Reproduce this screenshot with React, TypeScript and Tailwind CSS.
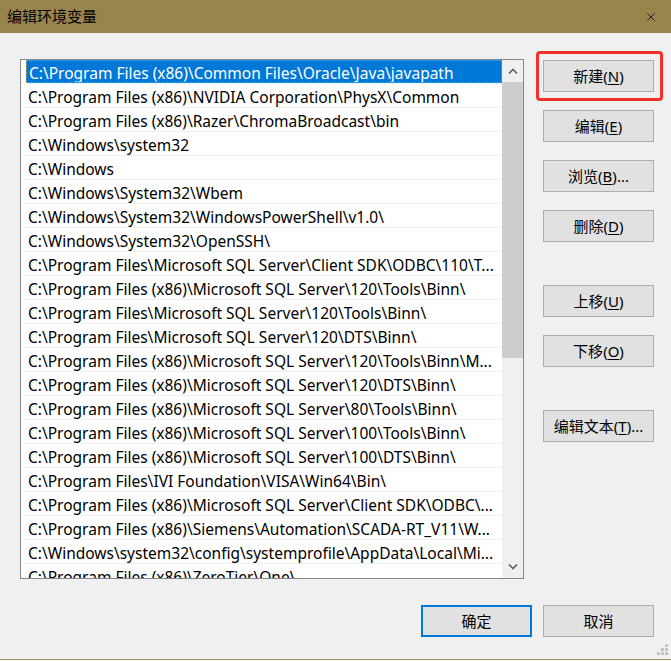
import { X } from "lucide-react";

const paths = [
  "C:\\Program Files (x86)\\Common Files\\Oracle\\Java\\javapath",
  "C:\\Program Files (x86)\\NVIDIA Corporation\\PhysX\\Common",
  "C:\\Program Files (x86)\\Razer\\ChromaBroadcast\\bin",
  "C:\\Windows\\system32",
  "C:\\Windows",
  "C:\\Windows\\System32\\Wbem",
  "C:\\Windows\\System32\\WindowsPowerShell\\v1.0\\",
  "C:\\Windows\\System32\\OpenSSH\\",
  "C:\\Program Files\\Microsoft SQL Server\\Client SDK\\ODBC\\110\\T...",
  "C:\\Program Files (x86)\\Microsoft SQL Server\\120\\Tools\\Binn\\",
  "C:\\Program Files\\Microsoft SQL Server\\120\\Tools\\Binn\\",
  "C:\\Program Files\\Microsoft SQL Server\\120\\DTS\\Binn\\",
  "C:\\Program Files (x86)\\Microsoft SQL Server\\120\\Tools\\Binn\\M...",
  "C:\\Program Files (x86)\\Microsoft SQL Server\\120\\DTS\\Binn\\",
  "C:\\Program Files (x86)\\Microsoft SQL Server\\80\\Tools\\Binn\\",
  "C:\\Program Files (x86)\\Microsoft SQL Server\\100\\Tools\\Binn\\",
  "C:\\Program Files (x86)\\Microsoft SQL Server\\100\\DTS\\Binn\\",
  "C:\\Program Files\\IVI Foundation\\VISA\\Win64\\Bin\\",
  "C:\\Program Files (x86)\\Microsoft SQL Server\\Client SDK\\ODBC\\...",
  "C:\\Program Files (x86)\\Siemens\\Automation\\SCADA-RT_V11\\W...",
  "C:\\Windows\\system32\\config\\systemprofile\\AppData\\Local\\Mi...",
  "C:\\Program Files (x86)\\ZeroTier\\One\\",
];

function DlgButton({
  label,
  hotkey,
  suffix = "",
  primary = false,
}: {
  label: string;
  hotkey?: string;
  suffix?: string;
  primary?: boolean;
}) {
  return (
    <button
      type="button"
      className={`flex h-[32px] w-[111px] items-center justify-center bg-[#e1e1e1] text-[15px] text-black ${
        primary ? "border-2 border-[#0078d7]" : "border border-[#adadad]"
      }`}
    >
      {label}
      {hotkey && (
        <>
          (<span className="underline underline-offset-2">{hotkey}</span>)
        </>
      )}
      {suffix}
    </button>
  );
}

function Chevron({ up }: { up?: boolean }) {
  return (
    <svg width="10" height="6" viewBox="0 0 10 6" className="text-[#606060]">
      <path
        d={up ? "M1 5.5 L5 1.5 L9 5.5" : "M1 0.5 L5 4.5 L9 0.5"}
        fill="none"
        stroke="currentColor"
        strokeWidth="1.6"
      />
    </svg>
  );
}

export default function App() {
  return (
    <div className="relative flex h-[661px] w-[671px] flex-col overflow-hidden bg-[#f0f0f0] font-['Noto_Sans','Noto_Sans_CJK_SC',sans-serif] text-black">
      <div className="flex h-[33px] shrink-0 items-center justify-between bg-[#99844d] pl-[7px] pr-[13px]">
        <span className="text-[15px] leading-none">编辑环境变量</span>
        <X size={14} strokeWidth={1.3} className="text-black" />
      </div>

      <div className="flex pl-[20px] pt-[26px]">
        <div className="flex h-[520px] w-[504px] border border-[#828790] bg-white">
          <div className="flex-1 overflow-hidden">
            {paths.map((p, i) => (
              <div key={p} className="h-[24px] border-b border-[#f0f0f0]">
                <div
                  className={`ml-[5px] flex h-[23px] items-center truncate whitespace-nowrap pl-[2px] pt-[4px] text-[15.5px] ${
                    i === 0
                      ? "border border-dotted border-[#e0903a] bg-[#0078d7] pl-[1px] pt-[3px] text-white"
                      : ""
                  }`}
                >
                  {p}
                </div>
              </div>
            ))}
          </div>
          <div className="flex w-[21px] flex-col bg-[#f0f0f0]">
            <div className="flex h-[22px] items-center justify-center">
              <Chevron up />
            </div>
            <div className="h-[276px] bg-[#cdcdcd]" />
            <div className="flex-1" />
            <div className="flex h-[22px] items-center justify-center">
              <Chevron />
            </div>
          </div>
        </div>

        <div className="ml-[19px] mt-[1px] flex flex-col">
          <div className="relative">
            <DlgButton label="新建" hotkey="N" />
            <span className="absolute -bottom-[9px] -left-[7px] -right-[9px] -top-[9px] rounded-[4px] border-[3px] border-[#f2302b]" />
          </div>
          <div className="mt-[18px] flex flex-col gap-[18px]">
            <DlgButton label="编辑" hotkey="E" />
            <DlgButton label="浏览" hotkey="B" suffix="..." />
            <DlgButton label="删除" hotkey="D" />
          </div>
          <div className="mt-[43px] flex flex-col gap-[18px]">
            <DlgButton label="上移" hotkey="U" />
            <DlgButton label="下移" hotkey="O" />
          </div>
          <div className="mt-[43px]">
            <DlgButton label="编辑文本" hotkey="T" suffix="..." />
          </div>
        </div>
      </div>

      <div className="flex justify-end gap-[11px] pr-[17px] pt-[26px]">
        <DlgButton label="确定" primary />
        <DlgButton label="取消" />
      </div>

      <div className="absolute bottom-[6px] right-[3px] grid grid-cols-3 gap-[1px]">
        <span />
        <span />
        <span className="h-[3px] w-[3px] bg-[#c4c4c4]" />
        <span />
        <span className="h-[3px] w-[3px] bg-[#c4c4c4]" />
        <span className="h-[3px] w-[3px] bg-[#c4c4c4]" />
        <span className="h-[3px] w-[3px] bg-[#c4c4c4]" />
        <span className="h-[3px] w-[3px] bg-[#c4c4c4]" />
        <span className="h-[3px] w-[3px] bg-[#c4c4c4]" />
      </div>
      <div className="absolute bottom-[1px] left-0 right-0 h-[1px] bg-[#a89660]" />
    </div>
  );
}
